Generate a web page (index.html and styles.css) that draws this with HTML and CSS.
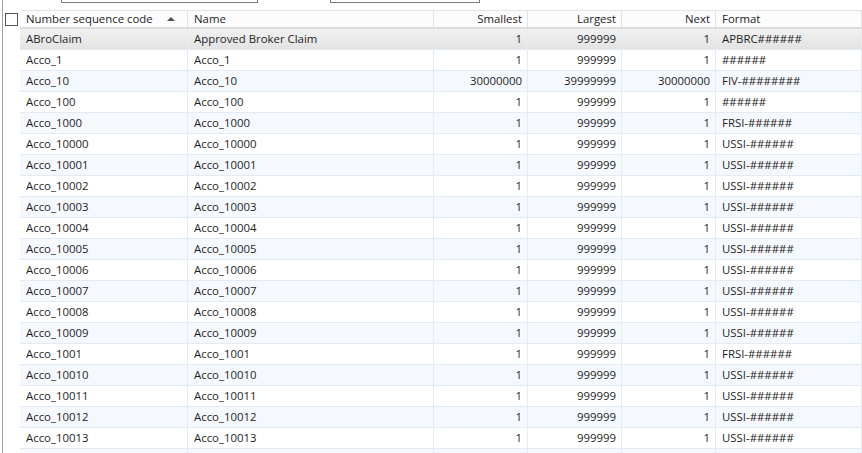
FILE: index.html
```html
<!DOCTYPE html>
<html>
<head>
<meta charset="utf-8">
<link rel="stylesheet" href="styles.css">
</head>
<body>
<div class="page">
  <div class="topbar">
    <div class="field field-a"></div>
    <div class="field field-b"></div>
  </div>
  <div class="main">
    <div class="gutter">
      <div class="gutter-head"><span class="checkbox"></span></div>
    </div>
    <div class="grid">
      <div class="row head">
        <div class="cell">Number sequence code<span class="sort"></span></div>
        <div class="cell">Name</div>
        <div class="cell num">Smallest</div>
        <div class="cell num">Largest</div>
        <div class="cell num">Next</div>
        <div class="cell">Format</div>
      </div>
      <div class="row sel"><div class="cell">ABroClaim</div><div class="cell">Approved Broker Claim</div><div class="cell num">1</div><div class="cell num">999999</div><div class="cell num">1</div><div class="cell">APBRC######</div></div>
      <div class="row"><div class="cell">Acco_1</div><div class="cell">Acco_1</div><div class="cell num">1</div><div class="cell num">999999</div><div class="cell num">1</div><div class="cell">######</div></div>
      <div class="row alt"><div class="cell">Acco_10</div><div class="cell">Acco_10</div><div class="cell num">30000000</div><div class="cell num">39999999</div><div class="cell num">30000000</div><div class="cell">FIV-########</div></div>
      <div class="row"><div class="cell">Acco_100</div><div class="cell">Acco_100</div><div class="cell num">1</div><div class="cell num">999999</div><div class="cell num">1</div><div class="cell">######</div></div>
      <div class="row alt"><div class="cell">Acco_1000</div><div class="cell">Acco_1000</div><div class="cell num">1</div><div class="cell num">999999</div><div class="cell num">1</div><div class="cell">FRSI-######</div></div>
      <div class="row"><div class="cell">Acco_10000</div><div class="cell">Acco_10000</div><div class="cell num">1</div><div class="cell num">999999</div><div class="cell num">1</div><div class="cell">USSI-######</div></div>
      <div class="row alt"><div class="cell">Acco_10001</div><div class="cell">Acco_10001</div><div class="cell num">1</div><div class="cell num">999999</div><div class="cell num">1</div><div class="cell">USSI-######</div></div>
      <div class="row"><div class="cell">Acco_10002</div><div class="cell">Acco_10002</div><div class="cell num">1</div><div class="cell num">999999</div><div class="cell num">1</div><div class="cell">USSI-######</div></div>
      <div class="row alt"><div class="cell">Acco_10003</div><div class="cell">Acco_10003</div><div class="cell num">1</div><div class="cell num">999999</div><div class="cell num">1</div><div class="cell">USSI-######</div></div>
      <div class="row"><div class="cell">Acco_10004</div><div class="cell">Acco_10004</div><div class="cell num">1</div><div class="cell num">999999</div><div class="cell num">1</div><div class="cell">USSI-######</div></div>
      <div class="row alt"><div class="cell">Acco_10005</div><div class="cell">Acco_10005</div><div class="cell num">1</div><div class="cell num">999999</div><div class="cell num">1</div><div class="cell">USSI-######</div></div>
      <div class="row"><div class="cell">Acco_10006</div><div class="cell">Acco_10006</div><div class="cell num">1</div><div class="cell num">999999</div><div class="cell num">1</div><div class="cell">USSI-######</div></div>
      <div class="row alt"><div class="cell">Acco_10007</div><div class="cell">Acco_10007</div><div class="cell num">1</div><div class="cell num">999999</div><div class="cell num">1</div><div class="cell">USSI-######</div></div>
      <div class="row"><div class="cell">Acco_10008</div><div class="cell">Acco_10008</div><div class="cell num">1</div><div class="cell num">999999</div><div class="cell num">1</div><div class="cell">USSI-######</div></div>
      <div class="row alt"><div class="cell">Acco_10009</div><div class="cell">Acco_10009</div><div class="cell num">1</div><div class="cell num">999999</div><div class="cell num">1</div><div class="cell">USSI-######</div></div>
      <div class="row"><div class="cell">Acco_1001</div><div class="cell">Acco_1001</div><div class="cell num">1</div><div class="cell num">999999</div><div class="cell num">1</div><div class="cell">FRSI-######</div></div>
      <div class="row alt"><div class="cell">Acco_10010</div><div class="cell">Acco_10010</div><div class="cell num">1</div><div class="cell num">999999</div><div class="cell num">1</div><div class="cell">USSI-######</div></div>
      <div class="row"><div class="cell">Acco_10011</div><div class="cell">Acco_10011</div><div class="cell num">1</div><div class="cell num">999999</div><div class="cell num">1</div><div class="cell">USSI-######</div></div>
      <div class="row alt"><div class="cell">Acco_10012</div><div class="cell">Acco_10012</div><div class="cell num">1</div><div class="cell num">999999</div><div class="cell num">1</div><div class="cell">USSI-######</div></div>
      <div class="row"><div class="cell">Acco_10013</div><div class="cell">Acco_10013</div><div class="cell num">1</div><div class="cell num">999999</div><div class="cell num">1</div><div class="cell">USSI-######</div></div>
      <div class="row alt"><div class="cell"></div><div class="cell"></div><div class="cell num"></div><div class="cell num"></div><div class="cell num"></div><div class="cell"></div></div>
    </div>
  </div>
</div>
</body>
</html>
```
FILE: styles.css
```css
html, body {
  margin: 0;
  padding: 0;
  background: #ffffff;
  overflow: hidden;
}
.page {
  width: 862px;
  height: 453px;
  overflow: hidden;
  font-family: "Segoe UI", "Open Sans", sans-serif;
  font-size: 11.4px;
  color: #1e1e1e;
}
.topbar {
  height: 10px;
  display: flex;
  overflow: hidden;
}
.field {
  height: 22px;
  margin-top: -19px;
  border: 1px solid #7a7a7a;
  background: #fff;
  box-sizing: border-box;
}
.field-a {
  margin-left: 61px;
  width: 197px;
}
.field-b {
  margin-left: 72px;
  width: 150px;
}
.main {
  display: flex;
  margin-top: -10px;
  padding-top: 10px;
  height: 453px;
}
.gutter {
  width: 17px;
  margin-left: 2px;
  border-left: 1px solid #a0a0a0;
  margin-top: -10px;
  padding-top: 10px;
}
.gutter-head {
  height: 19px;
  display: flex;
  align-items: flex-start;
}
.checkbox {
  width: 13px;
  height: 13px;
  box-sizing: border-box;
  border: 1px solid #555;
  margin-left: 2px;
  margin-top: 3px;
  background: #fff;
}
.grid {
  flex: 1;
}
.row {
  display: grid;
  grid-template-columns: 168px 246px 94px 94px 94px 1fr;
  height: 21px;
  box-sizing: border-box;
  border-bottom: 1px solid #e3ebf5;
}
.row .cell {
  border-right: 1px solid #e3ebf5;
  padding: 0 6px;
  line-height: 20px;
  white-space: nowrap;
  overflow: hidden;
}
.row .cell.num {
  text-align: right;
  padding-right: 5px;
}
.row.alt {
  background: #f5f8fd;
}
.row.sel {
  background: linear-gradient(#f1f1f1, #e3e3e3);
}
.row.head {
  height: 19px;
  background: #fcfcfc;
  border-top: 1px solid #e3e3e3;
  border-bottom: 2px solid #dcdcdc;
}
.row.head .cell {
  border-right: 1px solid #e2e2e2;
  line-height: 16px;
  position: relative;
}
.sort {
  position: absolute;
  left: 147px;
  top: 6px;
  width: 0;
  height: 0;
  border-left: 4px solid transparent;
  border-right: 4px solid transparent;
  border-bottom: 4px solid #505050;
}
```
